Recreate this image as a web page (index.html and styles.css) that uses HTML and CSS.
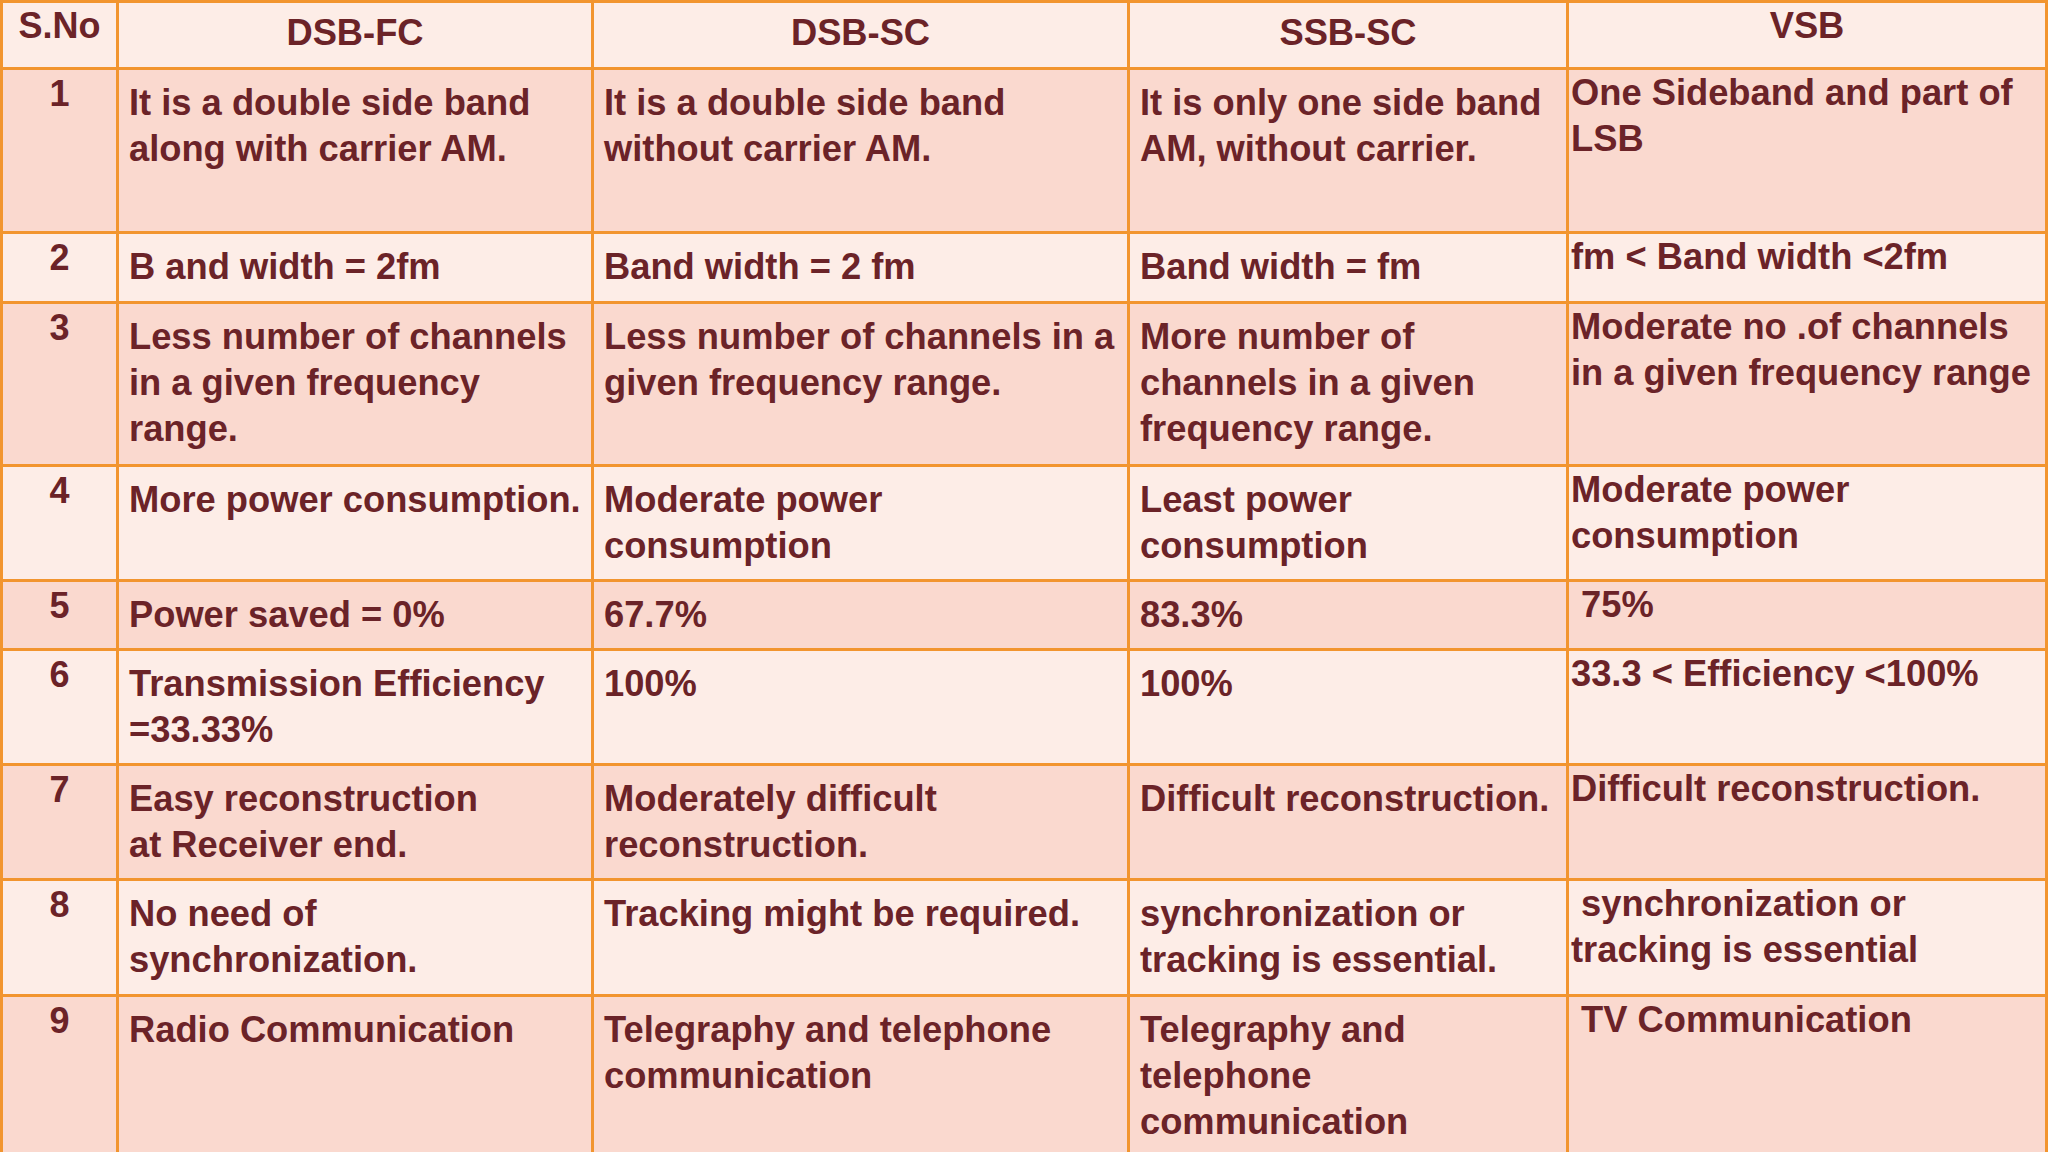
FILE: index.html
```html
<!DOCTYPE html>
<html lang="en">
<head>
<meta charset="utf-8">
<title>AM comparison</title>
<link rel="stylesheet" href="styles.css">
</head>
<body>
<div class="sheet">
  <div class="row light h-head">
    <div class="cell num head-sno">S.No</div>
    <div class="cell head">DSB-FC</div>
    <div class="cell head">DSB-SC</div>
    <div class="cell head">SSB-SC</div>
    <div class="cell head head-vsb">VSB</div>
  </div>
  <div class="row dark h-164">
    <div class="cell num">1</div>
    <div class="cell">It is a double side band<br>along with carrier AM.</div>
    <div class="cell">It is a double side band<br>without carrier AM.</div>
    <div class="cell">It is only one side band<br>AM, without carrier.</div>
    <div class="cell vsb">One Sideband and part of<br>LSB</div>
  </div>
  <div class="row light h-70">
    <div class="cell num">2</div>
    <div class="cell">B and width = 2fm</div>
    <div class="cell">Band width = 2 fm</div>
    <div class="cell">Band width = fm</div>
    <div class="cell vsb">fm &lt; Band width &lt;2fm</div>
  </div>
  <div class="row dark h-163">
    <div class="cell num">3</div>
    <div class="cell">Less number of channels<br>in a given frequency<br>range.</div>
    <div class="cell">Less number of channels in a<br>given frequency range.</div>
    <div class="cell">More number of<br>channels in a given<br>frequency range.</div>
    <div class="cell vsb">Moderate no .of channels<br>in a given frequency range</div>
  </div>
  <div class="row light h-115">
    <div class="cell num">4</div>
    <div class="cell">More power consumption.</div>
    <div class="cell">Moderate power<br>consumption</div>
    <div class="cell">Least power<br>consumption</div>
    <div class="cell vsb">Moderate power<br>consumption</div>
  </div>
  <div class="row dark h-69">
    <div class="cell num">5</div>
    <div class="cell">Power saved = 0%</div>
    <div class="cell">67.7%</div>
    <div class="cell">83.3%</div>
    <div class="cell vsb"> 75%</div>
  </div>
  <div class="row light h-115">
    <div class="cell num">6</div>
    <div class="cell">Transmission Efficiency<br>=33.33%</div>
    <div class="cell">100%</div>
    <div class="cell">100%</div>
    <div class="cell vsb">33.3 &lt; Efficiency &lt;100%</div>
  </div>
  <div class="row dark h-115">
    <div class="cell num">7</div>
    <div class="cell">Easy reconstruction<br>at Receiver end.</div>
    <div class="cell">Moderately difficult<br>reconstruction.</div>
    <div class="cell">Difficult reconstruction.</div>
    <div class="cell vsb">Difficult reconstruction.</div>
  </div>
  <div class="row light h-116">
    <div class="cell num">8</div>
    <div class="cell">No need of<br>synchronization.</div>
    <div class="cell">Tracking might be required.</div>
    <div class="cell">synchronization or<br>tracking is essential.</div>
    <div class="cell vsb"> synchronization or<br>tracking is essential</div>
  </div>
  <div class="row dark h-last">
    <div class="cell num">9</div>
    <div class="cell">Radio Communication</div>
    <div class="cell">Telegraphy and telephone<br>communication</div>
    <div class="cell">Telegraphy and<br>telephone<br>communication</div>
    <div class="cell vsb"> TV Communication</div>
  </div>
</div>
</body>
</html>
```
FILE: styles.css
```css
* {
  box-sizing: border-box;
}

html, body {
  margin: 0;
  padding: 0;
  width: 2048px;
  height: 1152px;
  overflow: hidden;
  background: #fad9cf;
}

.sheet {
  width: 2048px;
  border-left: 3px solid #f2952f;
  border-top: 3px solid #f2952f;
  font-family: "Liberation Sans", Arial, sans-serif;
  font-weight: bold;
  color: #6b2328;
}

.row {
  display: grid;
  grid-template-columns: 116px 475px 536px 439px 479px;
  border-bottom: 3px solid #f2952f;
}

.light { background: #fdede7; }
.dark { background: #fad9cf; }

.h-head { height: 66.5px; }
.h-164 { height: 164px; }
.h-70 { height: 70px; }
.h-163 { height: 163px; }
.h-115 { height: 115px; }
.h-69 { height: 69px; }
.h-116 { height: 116px; }
.h-last { height: 170px; }

.cell {
  border-right: 3px solid #f2952f;
  font-size: 36.3px;
  line-height: 46px;
  padding: 10px 0 0 10px;
  white-space: pre;
  overflow: hidden;
}

.cell.num {
  font-size: 36px;
  text-align: center;
  padding: 1px 0 0 0;
}

.cell.vsb {
  padding: 0 0 0 2px;
}

.cell.head {
  text-align: center;
  padding: 7px 0 0 0;
}

.cell.head-sno {
  padding: 0;
}

.cell.head-vsb {
  padding: 0;
}
```
